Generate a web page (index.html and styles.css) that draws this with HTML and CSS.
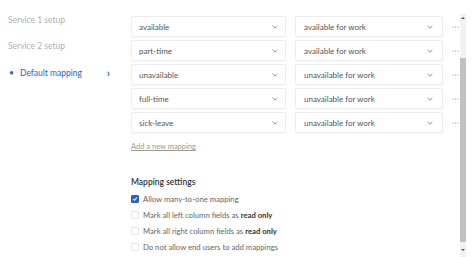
FILE: index.html
```html
<!DOCTYPE html>
<html lang="en">
<head>
    <meta charset="UTF-8">
    <title>Default mapping</title>
    <link rel="stylesheet" href="styles.css">
</head>
<body>
    <div class="page">
        <nav class="sidebar">
            <a class="nav-item">Service 1 setup</a>
            <a class="nav-item">Service 2 setup</a>
            <a class="nav-item active"><span class="bullet">•</span> Default mapping <span class="chev">›</span></a>
        </nav>

        <main class="main">
            <div class="content">
                <div class="rows">
                    <div class="row">
                        <div class="select left">available<svg class="caret" viewBox="0 0 10 6"><path d="M1 1l4 4 4-4"/></svg></div>
                        <div class="select right">available for work<svg class="caret" viewBox="0 0 10 6"><path d="M1 1l4 4 4-4"/></svg></div>
                        <svg class="more" viewBox="0 0 7 2"><circle cx="1" cy="1" r="0.6"/><circle cx="3.5" cy="1" r="0.6"/><circle cx="6" cy="1" r="0.6"/></svg>
                    </div>
                    <div class="row">
                        <div class="select left">part-time<svg class="caret" viewBox="0 0 10 6"><path d="M1 1l4 4 4-4"/></svg></div>
                        <div class="select right">available for work<svg class="caret" viewBox="0 0 10 6"><path d="M1 1l4 4 4-4"/></svg></div>
                        <svg class="more" viewBox="0 0 7 2"><circle cx="1" cy="1" r="0.6"/><circle cx="3.5" cy="1" r="0.6"/><circle cx="6" cy="1" r="0.6"/></svg>
                    </div>
                    <div class="row">
                        <div class="select left">unavailable<svg class="caret" viewBox="0 0 10 6"><path d="M1 1l4 4 4-4"/></svg></div>
                        <div class="select right">unavailable for work<svg class="caret" viewBox="0 0 10 6"><path d="M1 1l4 4 4-4"/></svg></div>
                        <svg class="more" viewBox="0 0 7 2"><circle cx="1" cy="1" r="0.6"/><circle cx="3.5" cy="1" r="0.6"/><circle cx="6" cy="1" r="0.6"/></svg>
                    </div>
                    <div class="row">
                        <div class="select left">full-time<svg class="caret" viewBox="0 0 10 6"><path d="M1 1l4 4 4-4"/></svg></div>
                        <div class="select right">unavailable for work<svg class="caret" viewBox="0 0 10 6"><path d="M1 1l4 4 4-4"/></svg></div>
                        <svg class="more" viewBox="0 0 7 2"><circle cx="1" cy="1" r="0.6"/><circle cx="3.5" cy="1" r="0.6"/><circle cx="6" cy="1" r="0.6"/></svg>
                    </div>
                    <div class="row">
                        <div class="select left">sick-leave<svg class="caret" viewBox="0 0 10 6"><path d="M1 1l4 4 4-4"/></svg></div>
                        <div class="select right">unavailable for work<svg class="caret" viewBox="0 0 10 6"><path d="M1 1l4 4 4-4"/></svg></div>
                        <svg class="more" viewBox="0 0 7 2"><circle cx="1" cy="1" r="0.6"/><circle cx="3.5" cy="1" r="0.6"/><circle cx="6" cy="1" r="0.6"/></svg>
                    </div>
                </div>

                <a class="add-link">Add a new mapping</a>

                <h3 class="settings-title">Mapping settings</h3>
                <ul class="settings">
                    <li><span class="box checked"><svg viewBox="0 0 10 10"><path d="M2 5.2l2 2 4-4.4"/></svg></span>Allow many-to-one mapping</li>
                    <li><span class="box"></span><span>Mark all left column fields as <b>read only</b></span></li>
                    <li><span class="box"></span><span>Mark all right column fields as <b>read only</b></span></li>
                    <li><span class="box"></span>Do not allow end users to add mappings</li>
                </ul>
            </div>

            <div class="scrollbar">
                <span class="arrow up"></span>
                <div class="track"><div class="thumb"></div></div>
                <span class="arrow down"></span>
            </div>
        </main>
    </div>
</body>
</html>
```

FILE: styles.css
```css
* {
    box-sizing: border-box;
}
body {
    margin: 0;
    font-family: Lato, "Open Sans", sans-serif;
    font-size: 8.5px;
    color: #444;
    background: #fff;
}
.page {
    display: flex;
    height: 257px;
    overflow: hidden;
}
.sidebar {
    width: 120px;
    flex-shrink: 0;
    padding-top: 13px;
    display: flex;
    flex-direction: column;
}
.nav-item {
    display: flex;
    align-items: center;
    height: 13px;
    margin-bottom: 13.5px;
    padding-left: 8px;
    color: #b0b0b0;
}
.nav-item.active {
    color: #2c62c4;
    padding-left: 9px;
}
.bullet {
    width: 11px;
}
.chev {
    margin-left: auto;
    margin-right: 10px;
    font-size: 11px;
    font-weight: bold;
}
.main {
    flex: 1;
    display: flex;
}
.content {
    flex: 1;
    padding: 16px 0 0 11px;
}
.rows {
    display: flex;
    flex-direction: column;
    gap: 3px;
}
.row {
    display: flex;
    align-items: center;
    height: 21px;
}
.select {
    flex-shrink: 0;
    height: 21px;
    display: flex;
    align-items: center;
    padding: 0 7px 0 7px;
    border: 1px solid #ececec;
    border-radius: 2px;
    box-shadow: 0 1px 1px rgba(0,0,0,0.03);
    font-size: 8px;
    color: #555;
}
.select.left {
    width: 155px;
    margin-right: 9px;
}
.select.right {
    width: 148px;
    padding: 0 9px 0 8px;
}
.caret {
    margin-left: auto;
    width: 6px;
    height: 4px;
    fill: none;
    stroke: #777;
    stroke-width: 1.4;
}
.more {
    flex-shrink: 0;
    margin-left: 9px;
    width: 7px;
    height: 2px;
    fill: #888;
}
.add-link {
    display: block;
    margin-top: 9px;
    font-size: 7.5px;
    color: #999;
    text-decoration: underline;
}
.settings-title {
    margin: 26px 0 4px;
    font-size: 8.5px;
    font-weight: 600;
    color: #333;
}
.settings {
    list-style: none;
    margin: 0;
    padding: 0;
}
.settings li {
    display: flex;
    align-items: center;
    height: 16px;
    font-size: 7.7px;
    color: #666;
}
.settings b {
    color: #333;
}
.box {
    width: 8px;
    height: 8px;
    margin-right: 4px;
    border: 1px solid #e6e6e6;
    border-radius: 1px;
}
.box.checked {
    background: #2c62c4;
    border-color: #2c62c4;
    display: flex;
}
.box.checked svg {
    width: 100%;
    height: 100%;
    fill: none;
    stroke: #fff;
    stroke-width: 1.8;
}
.scrollbar {
    width: 6px;
    flex-shrink: 0;
    margin-right: 8px;
    padding: 14px 0 3px;
    display: flex;
    flex-direction: column;
    align-items: center;
    background: linear-gradient(#fff 14px, #f1f1f1 14px);
}
.arrow {
    width: 0;
    height: 0;
    border-left: 2px solid transparent;
    border-right: 2px solid transparent;
    margin: 3px 0;
}
.arrow.up {
    border-bottom: 2px solid #555;
}
.arrow.down {
    border-top: 2px solid #555;
}
.track {
    flex: 1;
    width: 100%;
    padding-top: 36px;
    padding-bottom: 4px;
    display: flex;
}
.thumb {
    flex: 1;
    background: #c1c1c1;
}
```
